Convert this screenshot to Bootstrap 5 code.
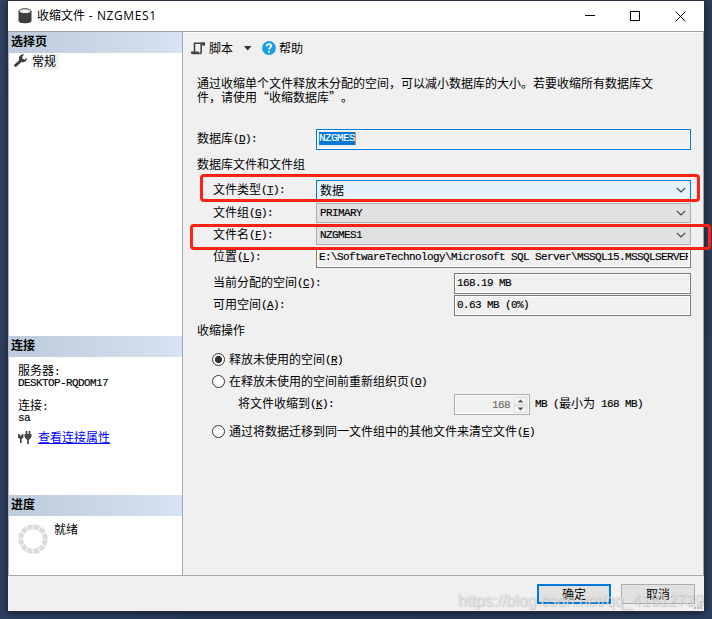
<!DOCTYPE html>
<html lang="zh-CN">
<head>
<meta charset="utf-8">
<meta name="viewport" content="width=device-width, initial-scale=1">
<title>收缩文件 - NZGMES1</title>
<link href="https://cdn.jsdelivr.net/npm/bootstrap@5.3.0/dist/css/bootstrap.min.css" rel="stylesheet">
<style>
body{width:712px;height:619px;overflow:hidden;background:linear-gradient(100deg,#2f4263,#293a58 50%,#2c3e5d);padding:1px 8px 8px;font:12px/14px "Noto Sans CJK SC",sans-serif;color:#000;text-spacing-trim:space-all}
.win{width:696px;height:610px;background:#f0f0f0;box-shadow:0 0 0 1px #282e3c,0 2px 7px #101828}
.titlebar{height:30px;background:#fff;padding-left:10px}
.titlebar .caption-text{font-family:"Open Sans","Noto Sans CJK SC",sans-serif;margin-left:5px}
.titlebar .caption-text span{letter-spacing:.6px}
.titlebar .controls{gap:35px;margin-right:18px}
.middle{height:545px;border:1px solid #a0a0a0;border-left-color:#b4b4bc;border-bottom-color:#a7a7a7}
.side{width:174px;background:#fff;border-right:1px solid #a8a8b4}
.side h2{font-size:12px;line-height:18px;font-weight:700;height:21px;margin:0;padding-left:2px;background:linear-gradient(90deg,#bccad9,#d6e3f1)}
.page-sel{height:283px;padding:1px 0 0 5px}
.page-sel .sel{background:#f0f0f0;height:16px;line-height:14px;padding:0 3px 0 1px;margin-left:3px}
.conn{height:138px;padding:6px 0 0 9px}
.conn a{color:#00f;margin-left:6px}
.conn div{height:14px}
.conn .val{line-height:12px;height:11px}
.conn .login{margin-top:10px}
.conn .props{margin-top:7px}
.prog{height:60px;padding:7px 0 0 8px}
.prog span{margin-left:5px;margin-top:-1px}
.lt{font-family:"Liberation Mono",monospace;font-size:11px;letter-spacing:-.6px;white-space:pre;-webkit-text-stroke:.15px}
label .lt,.opt .lt,.unit .lt{vertical-align:1px;line-height:1}
.main-pane{padding:0 12px 0 14px;width:520px;border-top:1px solid #fff}
.tools{height:30px;margin-left:-6px}
.tools .help{margin-left:3px}
.desc{margin:13px 0 25px;width:468px;height:28px}
.f-row{height:21px;margin-bottom:1px}
.f-row>label{width:119px;flex:none;line-height:18px}
.ind>label{padding-left:16px}
.wide-l>label{width:257px}
.box{flex:1;min-width:0;height:21px;border:1px solid #7a7a7a;box-shadow:inset 0 0 0 1px #fff;background:#f0f0f0;padding:0 2px;line-height:18px}
.box>.lt{display:block;overflow:hidden}
.box>.lt.hl{display:inline-block;height:13px;line-height:13px;margin-top:2px}
.box.blue{border-color:#0078d7}
.combo{flex:1;height:20px;border:1px solid #adadad;background:#e1e1e1;padding:0 4px 0 3px;line-height:18px}
.combo.hot{border-color:#0078d7;background:#e5f1fb}
.hl{background:#0078d7;color:#fff;border-right:1px solid #ff8a28}
.sec{height:20px;line-height:20px}
.pad-a{margin:6px 0 2px}
.pad-b{margin-top:5px}
.opt{height:22px;padding-left:15px;gap:4px}
.opts{margin-top:8px}
.shrink-to{margin-top:2px}
.f-row.shrink-to>label{padding-left:41px}
.last{margin-top:5px}
.dot{width:13px;height:13px;border:1px solid #333;border-radius:50%;background:#fff;flex:none}
.dot.on{background:radial-gradient(circle,#333 0 3.3px,#fff 3.9px)}
.spin{width:76px;height:21px;border:1px solid #adadad;box-shadow:inset 0 0 0 1px #f8f8f8;color:#6d6d6d;padding-right:1px}
.unit{margin-left:5px;line-height:17px}
.foot{height:35px;padding:8px 9px 0 0;gap:10px}
.push{width:74px;height:20px;border:1px solid #adadad;background:#e1e1e1;padding:0;font:inherit;line-height:18px;color:#000}
.push.dflt{border:2px solid #0078d7;line-height:16px}
.mark-box{position:absolute;border:3px solid #ff2113;border-radius:4px}
.m1{left:200px;top:174px;width:500px;height:28px}
.m2{left:190px;top:224px;width:521px;height:26px}
.wm{position:absolute;left:458px;top:592px;font:16px/18px "Liberation Sans",sans-serif;color:rgba(255,255,255,.6);text-shadow:0 0 1px rgba(110,110,110,.35),1px 1px 1px rgba(130,130,130,.3);white-space:nowrap}
.grip{position:absolute;left:694px;top:601px}
svg{flex:none;display:block}
</style>
</head>
<body class="position-relative">
<div class="win d-flex flex-column">
  <header class="titlebar d-flex align-items-center">
    <svg width="14" height="16" viewBox="0 0 14 16"><path d="M.5 3v10c0 3 13 3 13 0V3z" fill="#3c3c3c"/><ellipse cx="7" cy="3.2" rx="6" ry="2.5" fill="#eee" stroke="#3c3c3c"/></svg>
    <span class="caption-text">收缩文件<span> - NZGMES1</span></span>
    <div class="controls d-flex align-items-center ms-auto">
      <svg width="10" height="10"><path d="M0 4.500h10" stroke="#000"/></svg>
      <svg width="10" height="10"><path d="M.5.5h9v9h-9z" fill="none" stroke="#000"/></svg>
      <svg width="11" height="11"><path d="M.5.5l10 10M10.500.5l-10 10" stroke="#000"/></svg>
    </div>
  </header>
  <div class="middle d-flex">
    <aside class="side">
      <h2>选择页</h2>
      <div class="page-sel d-flex align-items-start">
        <svg width="14" height="13" viewBox="0 0 14 13"><path d="M1.600 11.400 7 6.500" stroke="#3f3f3f" stroke-width="2.800" stroke-linecap="round"/><path d="M10.200.6a4 4 0 1 0 2.600 3.200L10.500 5.800 8.400 4.600 8.300 2.500z" fill="#3f3f3f"/></svg>
        <span class="sel">常规</span>
      </div>
      <h2>连接</h2>
      <div class="conn">
        <div>服务器<span class="lt">:</span></div>
        <div class="lt val">DESKTOP-RQDOM17</div>
        <div class="login">连接<span class="lt">:</span></div>
        <div class="lt val">sa</div>
        <div class="props d-flex align-items-center">
          <svg width="14" height="13" viewBox="0 0 14 13"><path d="M1 3v3h3.500V3M2.800 6v6M8.500 0v3M11.500 0v3M10 8v5" stroke="#444" stroke-width="1.700" fill="none"/><path d="M6.500 3h7v3l-2 2.500h-3L6.500 6zM.2 4.500h5V6L3.800 8h-2L.2 6z" fill="#444"/></svg>
          <a href="#">查看连接属性</a>
        </div>
      </div>
      <h2>进度</h2>
      <div class="prog d-flex align-items-start">
        <svg width="32" height="32" viewBox="0 0 32 32"><circle cx="16" cy="16" r="12.300" fill="none" stroke="#dcdcdc" stroke-width="5" stroke-dasharray="5.440 1" stroke-dashoffset="-.5"/></svg>
        <span>就绪</span>
      </div>
    </aside>
    <main class="main-pane">
      <div class="tools d-flex align-items-center">
        <svg width="14" height="13" viewBox="0 0 14 13"><path d="M3.500 10V1.200H13v2.300M10.200 1.500v8.800q0 1.500-1.500 1.500M0 11h8.500" fill="none" stroke="#424242" stroke-width="1.600"/><path d="M0 9.500h7.500l1 2.800H2Q.3 12.300 0 9.500zM10 .5h4v3h-2.500z" fill="#424242"/></svg>
        <span class="ms-1">脚本</span>
        <svg class="ms-2" width="13" height="5" viewBox="0 0 13 5"><path d="M3 0h7.500L6.700 4.500z" fill="#333"/></svg>
        <svg class="ms-2" width="14" height="14" viewBox="0 0 15 15"><circle cx="7.500" cy="7.500" r="7.400" fill="#1b9fe0"/><path d="M5 5.700C5 2.500 10 2.700 10 5.400 10 7 7.500 7 7.500 9.200M7.500 10.500v2" fill="none" stroke="#fff" stroke-width="1.900"/></svg>
        <span class="help">帮助</span>
      </div>
      <p class="desc">通过收缩单个文件释放未分配的空间，可以减小数据库的大小。若要收缩所有数据库文<br>件，请使用“收缩数据库”。</p>
      <div class="f-row d-flex"><label>数据库<span class="lt">(<u>D</u>):</span></label><div class="box blue"><span class="lt hl">NZGMES</span></div></div>
      <div class="sec mt-1">数据库文件和文件组</div>
      <div class="f-row ind d-flex pad-a"><label>文件类型<span class="lt">(<u>T</u>):</span></label><div class="combo hot d-flex align-items-center justify-content-between">数据<svg width="10" height="6"><path d="M.8.8 5 5 9.200.8" fill="none" stroke="#444" stroke-width="1.200"/></svg></div></div>
      <div class="f-row ind d-flex"><label>文件组<span class="lt">(<u>G</u>):</span></label><div class="combo d-flex align-items-center justify-content-between"><span class="lt">PRIMARY</span><svg width="10" height="6"><path d="M.8.8 5 5 9.200.8" fill="none" stroke="#444" stroke-width="1.200"/></svg></div></div>
      <div class="f-row ind d-flex"><label>文件名<span class="lt">(<u>F</u>):</span></label><div class="combo d-flex align-items-center justify-content-between"><span class="lt">NZGMES1</span><svg width="10" height="6"><path d="M.8.8 5 5 9.200.8" fill="none" stroke="#444" stroke-width="1.200"/></svg></div></div>
      <div class="f-row ind d-flex"><label>位置<span class="lt">(<u>L</u>):</span></label><div class="box"><span class="lt">E:\SoftwareTechnology\Microsoft SQL Server\MSSQL15.MSSQLSERVER</span></div></div>
      <div class="f-row ind wide-l d-flex pad-b"><label>当前分配的空间<span class="lt">(<u>C</u>):</span></label><div class="box"><span class="lt">168.19 MB</span></div></div>
      <div class="f-row ind wide-l d-flex"><label>可用空间<span class="lt">(<u>A</u>):</span></label><div class="box"><span class="lt">0.63 MB (0%)</span></div></div>
      <div class="sec mt-1">收缩操作</div>
      <div class="opt opts d-flex align-items-center"><span class="dot on"></span><span>释放未使用的空间<span class="lt">(<u>R</u>)</span></span></div>
      <div class="opt d-flex align-items-center"><span class="dot"></span><span>在释放未使用的空间前重新组织页<span class="lt">(<u>O</u>)</span></span></div>
      <div class="f-row wide-l shrink-to d-flex"><label>将文件收缩到<span class="lt">(<u>K</u>):</span></label>
        <div class="spin d-flex align-items-center justify-content-end"><span class="lt">168</span><svg class="ms-1" width="14" height="18"><path d="M.5 1.500h12v7H.5zM.5 9.500h12v7H.5z" fill="#f4f4f4" stroke="#ddd"/><path d="M3.500 6.500h6l-3-3zM3.500 11.500h6l-3 3z" fill="#555"/></svg></div>
        <span class="unit"><span class="lt">MB (</span>最小为<span class="lt"> 168 MB)</span></span></div>
      <div class="opt d-flex align-items-center last"><span class="dot"></span><span>通过将数据迁移到同一文件组中的其他文件来清空文件<span class="lt">(<u>E</u>)</span></span></div>
    </main>
  </div>
  <footer class="foot d-flex justify-content-end">
    <button class="push dflt">确定</button>
    <button class="push">取消</button>
  </footer>
</div>
<div class="mark-box m1"></div>
<div class="mark-box m2"></div>
<svg class="grip" width="9" height="9"><path d="M6 0h2v2H6zM3 3h2v2H3zM6 3h2v2H6zM0 6h2v2H0zM3 6h2v2H3zM6 6h2v2H6z" fill="#b8b8b8"/></svg>
<div class="wm">https://blog.csdn.net/qq_41612739</div>
<script src="https://cdn.jsdelivr.net/npm/bootstrap@5.3.0/dist/js/bootstrap.bundle.min.js"></script>
</body>
</html>
